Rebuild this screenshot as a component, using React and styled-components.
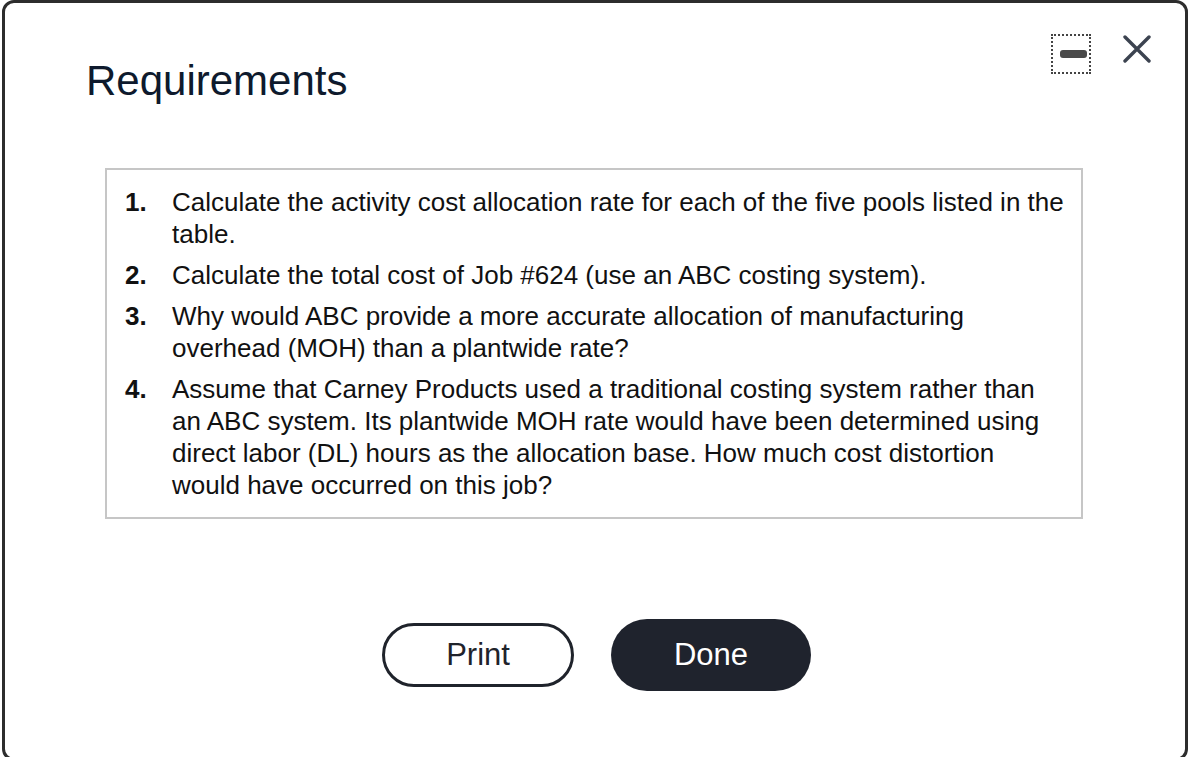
import React from 'react';
import styled, { createGlobalStyle } from 'styled-components';

const GlobalStyle = createGlobalStyle`
  html, body {
    margin: 0;
    padding: 0;
    background: #ffffff;
    overflow: hidden;
  }

  body {
    font-family: 'Liberation Sans', Arial, sans-serif;
  }
`;

const Modal = styled.div`
  box-sizing: border-box;
  width: 1186px;
  height: 761px;
  margin-left: 2px;
  border: 3px solid #2d2d2d;
  border-radius: 12px;
  background: #ffffff;
  display: flex;
  flex-direction: column;
`;

const Header = styled.div`
  display: flex;
  justify-content: space-between;
  align-items: flex-start;
  padding: 31px 34px 0 81px;
`;

const Title = styled.h2`
  margin: 23px 0 0 0;
  font-size: 42px;
  line-height: 48px;
  font-weight: 400;
  color: #0e1a2d;
`;

const Controls = styled.div`
  display: flex;
  align-items: flex-start;
  gap: 32px;
`;

const MinimizeBtn = styled.button`
  box-sizing: border-box;
  width: 40px;
  height: 40px;
  padding: 0;
  border: 2px dotted #444;
  background: transparent;
  display: flex;
  align-items: center;
  justify-content: center;
  cursor: pointer;
`;

const MinimizeBar = styled.span`
  display: block;
  width: 27px;
  height: 8px;
  margin-left: 5px;
  border-radius: 3px;
  background: #4a4a4a;
`;

const CloseBtn = styled.button`
  width: 28px;
  height: 28px;
  margin-top: 1px;
  padding: 0;
  border: none;
  background: transparent;
  cursor: pointer;
  display: flex;
`;

const Box = styled.div`
  margin: 63px 102px 0 100px;
  padding: 16px 15px 16px 18px;
  border: 2px solid #c6c6c6;
`;

const List = styled.ol`
  list-style: none;
  margin: 0;
  padding: 0;
`;

const Item = styled.li`
  display: grid;
  grid-template-columns: 47px 1fr;
  font-size: 26px;
  line-height: 32px;
  color: #111;
  margin-bottom: ${({ last }) => (last ? '0' : '9px')};
`;

const Num = styled.span`
  font-weight: 700;
`;

const Buttons = styled.div`
  display: flex;
  justify-content: center;
  align-items: center;
  gap: 37px;
  margin-top: 100px;
  padding-left: 3px;
`;

const Button = styled.button`
  box-sizing: border-box;
  border-radius: 40px;
  font-family: 'Liberation Sans', Arial, sans-serif;
  font-size: 31px;
  cursor: pointer;
`;

const PrintBtn = styled(Button)`
  width: 192px;
  height: 64px;
  background: #ffffff;
  color: #1f232b;
  border: 3px solid #1f232b;
`;

const DoneBtn = styled(Button)`
  width: 200px;
  height: 72px;
  background: #1f232d;
  color: #ffffff;
  border: none;
`;

const items = [
  'Calculate the activity cost allocation rate for each of the five pools listed in the table.',
  'Calculate the total cost of Job #624 (use an ABC costing system).',
  'Why would ABC provide a more accurate allocation of manufacturing overhead (MOH) than a plantwide rate?',
  'Assume that Carney Products used a traditional costing system rather than an ABC system. Its plantwide MOH rate would have been determined using direct labor (DL) hours as the allocation base. How much cost distortion would have occurred on this job?'
];

const App = () => {
  return (
    <>
      <GlobalStyle />
      <Modal>
        <Header>
          <Title>Requirements</Title>
          <Controls>
            <MinimizeBtn type="button" aria-label="Minimize">
              <MinimizeBar />
            </MinimizeBtn>
            <CloseBtn type="button" aria-label="Close">
              <svg width="28" height="28" viewBox="0 0 28 28">
                <path
                  d="M2 2 L26 26 M26 2 L2 26"
                  stroke="#3c4350"
                  strokeWidth="3.4"
                  strokeLinecap="round"
                  fill="none"
                />
              </svg>
            </CloseBtn>
          </Controls>
        </Header>
        <Box>
          <List>
            {items.map((text, i) => (
              <Item key={i} last={i === items.length - 1}>
                <Num>{i + 1}.</Num>
                <span>{text}</span>
              </Item>
            ))}
          </List>
        </Box>
        <Buttons>
          <PrintBtn type="button">Print</PrintBtn>
          <DoneBtn type="button">Done</DoneBtn>
        </Buttons>
      </Modal>
    </>
  );
};

export default App;
